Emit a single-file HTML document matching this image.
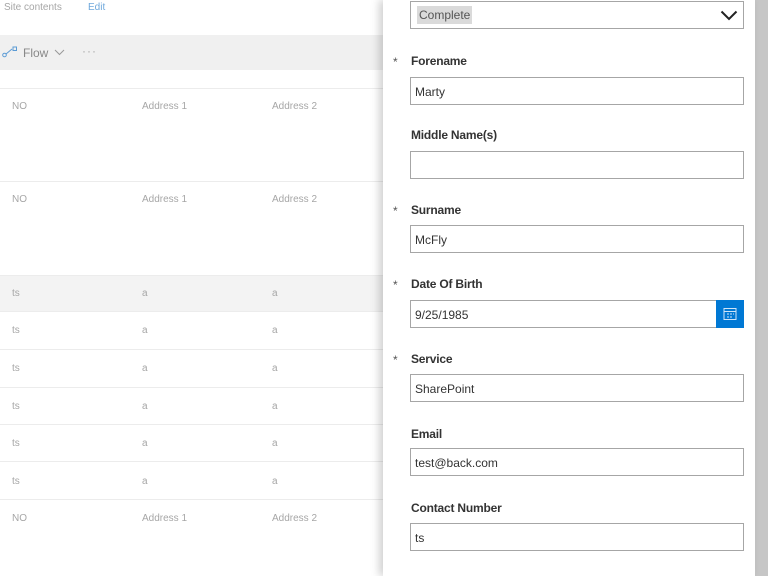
<!DOCTYPE html>
<html><head><style>
*{margin:0;padding:0;box-sizing:border-box}
body{width:768px;height:576px;overflow:hidden;background:#fff;font-family:"Liberation Sans",sans-serif;position:relative}
.a{position:absolute}
.l{color:#a6a6a6;font-size:10px}
.row{position:absolute;left:0;width:383px;border-top:1px solid #ececec}
.panel{position:absolute;left:383px;top:0;width:372px;height:576px;background:#fff;box-shadow:-4px 0 8px rgba(0,0,0,.18)}
.lab{position:absolute;left:28px;font-size:12px;color:#333;font-weight:bold;letter-spacing:-0.2px}
.star{position:absolute;left:10px;font-size:12px;color:#555}
.inp{position:absolute;left:27px;width:334px;height:28px;border:1px solid #a6a6a6;font-size:12px;color:#333;padding:7px 4px}
</style></head><body>
<div class="a" style="left:4px;top:2px;font-size:10px;color:#a6a6a6">Site contents</div>
<div class="a" style="left:88px;top:2px;font-size:10px;color:#6fa8dc">Edit</div>
<div class="a" style="left:0;top:35px;width:383px;height:35px;background:#f0f0f0"></div>
<svg class="a" style="left:2px;top:46px" width="16" height="12"><circle cx="2.5" cy="9" r="1.8" fill="none" stroke="#5b9bd5"/><rect x="11" y="1" width="3.5" height="3.5" fill="none" stroke="#5b9bd5"/><path d="M4 8 L10 3" stroke="#5b9bd5"/></svg>
<div class="a" style="left:23px;top:46px;font-size:12px;color:#888">Flow</div>
<svg class="a" style="left:54px;top:49px" width="11" height="7"><path d="M1 1 L5.5 5.5 L10 1" fill="none" stroke="#999"/></svg>
<div class="a" style="left:82px;top:44px;font-size:12px;color:#aaa;letter-spacing:1px">···</div>
<div class="row" style="top:88px"></div>
<div class="row" style="top:181px"></div>
<div class="a" style="left:0;top:275px;width:383px;height:36px;background:#f3f3f3"></div>
<div class="row" style="top:275px"></div><div class="row" style="top:311px"></div><div class="row" style="top:349px"></div><div class="row" style="top:387px"></div><div class="row" style="top:424px"></div><div class="row" style="top:461px"></div><div class="row" style="top:499px"></div>
<div class="a l" style="left:12px;top:101px">NO</div><div class="a l" style="left:142px;top:101px">Address 1</div><div class="a l" style="left:272px;top:101px">Address 2</div>
<div class="a l" style="left:12px;top:194px">NO</div><div class="a l" style="left:142px;top:194px">Address 1</div><div class="a l" style="left:272px;top:194px">Address 2</div>
<div class="a l" style="left:12px;top:288px">ts</div><div class="a l" style="left:142px;top:288px">a</div><div class="a l" style="left:272px;top:288px">a</div>
<div class="a l" style="left:12px;top:325px">ts</div><div class="a l" style="left:142px;top:325px">a</div><div class="a l" style="left:272px;top:325px">a</div>
<div class="a l" style="left:12px;top:363px">ts</div><div class="a l" style="left:142px;top:363px">a</div><div class="a l" style="left:272px;top:363px">a</div>
<div class="a l" style="left:12px;top:401px">ts</div><div class="a l" style="left:142px;top:401px">a</div><div class="a l" style="left:272px;top:401px">a</div>
<div class="a l" style="left:12px;top:438px">ts</div><div class="a l" style="left:142px;top:438px">a</div><div class="a l" style="left:272px;top:438px">a</div>
<div class="a l" style="left:12px;top:476px">ts</div><div class="a l" style="left:142px;top:476px">a</div><div class="a l" style="left:272px;top:476px">a</div>
<div class="a l" style="left:12px;top:513px">NO</div><div class="a l" style="left:142px;top:513px">Address 1</div><div class="a l" style="left:272px;top:513px">Address 2</div>
<div class="a" style="left:755px;top:0;width:13px;height:576px;background:#c6c6c6"></div>
<div class="panel">
<div class="inp" style="top:1px;padding:6px 6px"><span style="background:#dadada;padding:2px 2px;color:#555">Complete</span>
<svg style="position:absolute;right:5px;top:8px" width="18" height="11"><path d="M1.5 1.5 L9 9 L16.5 1.5" fill="none" stroke="#222" stroke-width="2"/></svg></div>
<div class="star" style="top:55px">*</div><div class="lab" style="top:54px">Forename</div><div class="inp" style="top:77px">Marty</div>
<div class="lab" style="top:128px">Middle Name(s)</div><div class="inp" style="top:151px"></div>
<div class="star" style="top:204px">*</div><div class="lab" style="top:203px">Surname</div><div class="inp" style="top:225px">McFly</div>
<div class="star" style="top:278px">*</div><div class="lab" style="top:277px">Date Of Birth</div><div class="inp" style="top:300px">9/25/1985</div>
<div class="a" style="left:333px;top:300px;width:28px;height:28px;background:#0078d4"><svg style="position:absolute;left:7px;top:7px" width="14" height="14"><rect x="1" y="1.5" width="12" height="11" fill="none" stroke="#cfe4f7"/><path d="M1 4.5H13" stroke="#cfe4f7"/><path d="M4 7h2M7 7h2M10 7h1M4 10h2M7 10h2" stroke="#cfe4f7"/></svg></div>
<div class="star" style="top:353px">*</div><div class="lab" style="top:352px">Service</div><div class="inp" style="top:374px">SharePoint</div>
<div class="lab" style="top:427px">Email</div><div class="inp" style="top:448px">test@back.com</div>
<div class="lab" style="top:501px">Contact Number</div><div class="inp" style="top:523px">ts</div>
</div>
</body></html>
